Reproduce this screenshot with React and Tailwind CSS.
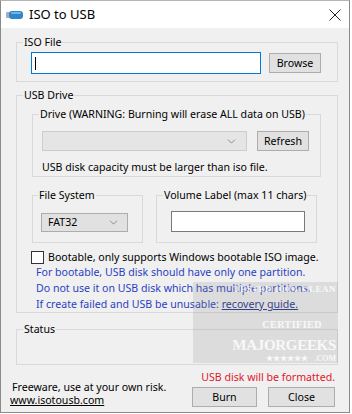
import { ChevronDown } from "lucide-react";

function Group({ label, className = "", legendClass = "ml-[6px]", children }) {
  return (
    <fieldset className={`border border-[#d9d9d9] ${className}`}>
      <legend className={`${legendClass} px-[1px] leading-[16px] whitespace-nowrap`}>{label}</legend>
      {children}
    </fieldset>
  );
}

function Button({ children, className = "" }) {
  return (
    <button className={`h-[20px] border border-[#adadad] bg-[#e1e1e1] text-[10.6px] leading-none text-black ${className}`}>
      {children}
    </button>
  );
}

function UsbIcon() {
  return (
    <svg width="17" height="8" viewBox="0 0 17 8">
      <rect x="0" y="1" width="4" height="6" rx="1" fill="#9fb2c4" />
      <rect x="3" y="0" width="14" height="8" rx="3" fill="#2f86c8" />
      <rect x="5" y="1" width="10" height="2" rx="1" fill="#6fb6e8" />
    </svg>
  );
}

export default function App() {
  return (
    <div className="w-[352px] h-[414px] overflow-hidden bg-white font-['Noto_Sans',sans-serif] text-[10.6px] text-black whitespace-nowrap">
      <div className="relative w-[350px] h-[413px] border border-[#8a8a8a] border-t-[#b5b5b5] flex flex-col bg-[#f0f0f0]">
        {/* Title bar */}
        <div className="h-[27px] bg-white flex items-center shrink-0">
          <div className="ml-[5px] mt-[1px]">
            <UsbIcon />
          </div>
          <span className="ml-[6px] text-[13px] leading-none">ISO to USB</span>
          <svg className="ml-auto mr-[8px]" width="12" height="12" viewBox="0 0 12 12">
            <path d="M0.5 0.5 L11.5 11.5 M11.5 0.5 L0.5 11.5" stroke="#222" strokeWidth="1" />
          </svg>
        </div>

        {/* Main */}
        <div className="pl-[15px] pr-[11px]">
          <Group label="ISO File" className="mt-[6px]">
            <div className="flex items-center pl-[14px] pt-[2px] pb-[7px]">
              <div className="w-[230px] h-[22px] border border-[#0078d7] bg-white flex items-center">
                <div className="ml-[3px] w-[1px] h-[13px] bg-black" />
              </div>
              <Button className="ml-[8px] w-[52px]">Browse</Button>
            </div>
          </Group>

          <Group label="USB Drive" className="mt-[5px]">
            <Group
              label="Drive (WARNING: Burning will erase ALL data on USB)"
              className="mt-[3px] ml-[15px] w-[289px]"
              legendClass="ml-[6px]"
            >
              <div className="pl-[9px] pt-[9px]">
                <div className="flex items-center">
                  <div className="w-[205px] h-[20px] border border-[#cccccc] bg-[#e5e5e5] flex items-center justify-end pr-[8px]">
                    <ChevronDown size={13} strokeWidth={1.3} color="#6a6a6a" />
                  </div>
                  <Button className="ml-[10px] w-[52px] h-[18px]">Refresh</Button>
                </div>
                <div className="mt-[8px] leading-[16px] pb-[1px]">
                  USB disk capacity must be larger than iso file.
                </div>
              </div>
            </Group>

            <div className="flex mt-[10px] ml-[15px]">
              <Group label="File System" className="w-[111px]" legendClass="ml-[5px]">
                <div className="pl-[8px] pt-[10px] pb-[10px]">
                  <div className="w-[87px] h-[19px] border border-[#adadad] bg-[#e1e1e1] flex items-center justify-between pl-[6px] pr-[7px]">
                    <span className="leading-none">FAT32</span>
                    <ChevronDown size={13} strokeWidth={1.3} color="#6a6a6a" />
                  </div>
                </div>
              </Group>
              <Group label="Volume Label (max 11 chars)" className="ml-[13px] w-[161px]" legendClass="ml-[6px]">
                <div className="pl-[14px] pt-[8px]">
                  <div className="w-[134px] h-[21px] border border-[#7a7a7a] bg-white" />
                </div>
              </Group>
            </div>

            <div className="mt-[7px] ml-[14px] h-[14px] flex items-center">
              <div className="w-[13px] h-[13px] border border-[#333] bg-white" />
              <span className="ml-[4px] leading-[14px]">Bootable, only supports Windows bootable ISO image.</span>
            </div>
            <div className="pl-[19px] leading-[16px] text-[#2a3fc0]">
              <div>For bootable, USB disk should have only one partition.</div>
              <div>Do not use it on USB disk which has multiple partitions.</div>
              <div>
                If create failed and USB be unusable:{" "}
                <span className="underline text-[#1c2c8c]">recovery guide.</span>
              </div>
            </div>
          </Group>

          <Group label="Status" className="mt-[8px]" legendClass="ml-[6px]">
            <div className="h-[27px]" />
          </Group>
        </div>

        {/* Footer */}
        <div className="flex justify-between pl-[9px] pr-[14px]">
          <div className="mt-[16px] leading-[13px]">
            <div className="ml-[2px]">Freeware, use at your own risk.</div>
            <div className="underline">www.isotousb.com</div>
          </div>
          <div className="flex flex-col items-end">
            <div className="mt-[4px] leading-[16px] text-[#e0162b]">USB disk will be formatted.</div>
            <div className="mt-[2px] flex">
              <Button className="w-[65px]">Burn</Button>
              <Button className="ml-[11px] w-[67px]">Close</Button>
            </div>
          </div>
        </div>

        {/* Watermark overlay */}
        <div className="absolute left-[192px] top-[281px] w-[145px] h-[81px] bg-[#8c8c8c]/20 flex flex-col items-end pr-[2px] font-['Liberation_Serif',serif] font-bold text-white/80 pointer-events-none">
          <div className="text-[9px] leading-[11px] mt-[2px] tracking-[0.5px]">TESTED 100% CLEAN</div>
          <div className="text-[10px] leading-[12px] mt-[24px] mr-[14px] tracking-[0.5px]">CERTIFIED</div>
          <div className="text-[15px] leading-[16px] mt-[6px] tracking-[-0.3px]">MAJORGEEKS</div>
          <div className="text-[8px] leading-[10px] mt-[1px]">★★★★★★ &nbsp;&nbsp;.COM</div>
        </div>
      </div>
    </div>
  );
}
